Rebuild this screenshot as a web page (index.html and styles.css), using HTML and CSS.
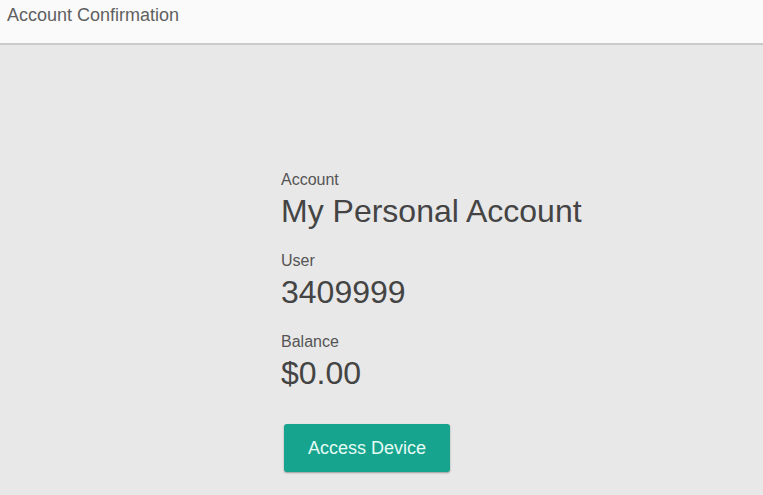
FILE: index.html
```html
<!DOCTYPE html>
<html lang="en">
<head>
<meta charset="utf-8">
<title>Account Confirmation</title>
<link rel="stylesheet" href="styles.css">
</head>
<body>
<header class="topbar">
  <h1 class="title">Account Confirmation</h1>
</header>
<main class="main">
  <div class="panel">
    <section class="field">
      <div class="label">Account</div>
      <div class="value">My Personal Account</div>
    </section>
    <section class="field">
      <div class="label">User</div>
      <div class="value">3409999</div>
    </section>
    <section class="field">
      <div class="label">Balance</div>
      <div class="value">$0.00</div>
    </section>
    <button class="btn" type="button">Access Device</button>
  </div>
</main>
</body>
</html>
```
FILE: styles.css
```css
html, body {
  margin: 0;
  padding: 0;
  height: 100%;
}
body {
  font-family: "Liberation Sans", Arial, sans-serif;
  background: #e8e8e8;
  color: #444;
  overflow: hidden;
}
.topbar {
  background: #fafafa;
  height: 43px;
  border-bottom: 2px solid #c9cbc9;
  box-sizing: content-box;
  padding: 0 7px;
}
.title {
  margin: 0;
  padding-top: 5px;
  font-size: 18px;
  font-weight: normal;
  line-height: normal;
  color: #606060;
}
.main {
  padding-top: 126px;
}
.panel {
  width: 201px;
  margin: 0 auto;
  white-space: nowrap;
}
.field {
  margin-bottom: 22px;
}
.label {
  font-size: 16px;
  color: #555;
  margin-bottom: 4px;
}
.value {
  font-size: 32px;
  color: #444;
}
.btn {
  margin: 10px 0 0 3px;
  width: 166px;
  height: 48px;
  border: none;
  border-radius: 3px;
  background: #16a48e;
  color: #e6fbf4;
  font-family: "Liberation Sans", Arial, sans-serif;
  font-size: 18px;
  box-shadow: 0 1px 2px rgba(0,0,0,0.35);
  padding: 0;
}
```
